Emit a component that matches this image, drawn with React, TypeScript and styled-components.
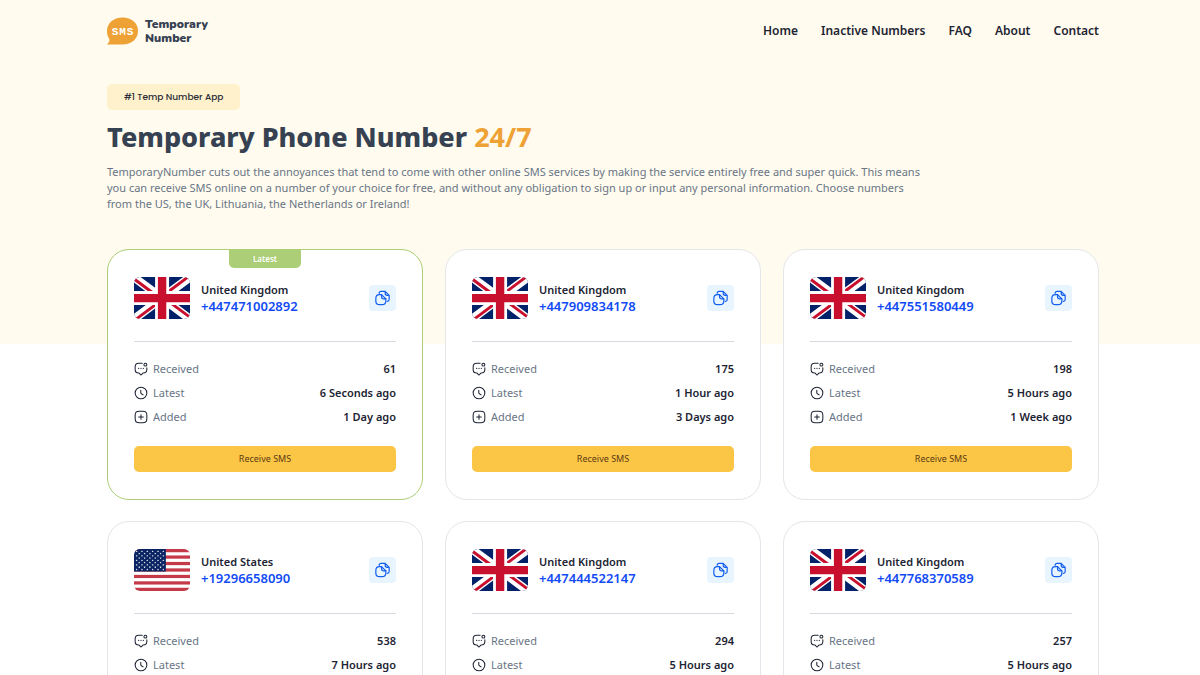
import React from "react";
import styled, { createGlobalStyle, css } from "styled-components";

const GlobalStyle = createGlobalStyle`
  *, *::before, *::after { box-sizing: border-box; }
  body {
    margin: 0;
    background: #fff;
    color: #1d2433;
    font-family: "Noto Sans", "Open Sans", sans-serif;
    font-size: 11px;
    line-height: 16px;
  }
  h1, h2, p, dl, dt, dd { margin: 0; }
  a { color: inherit; text-decoration: none; }
`;

const gutters = css`
  padding-left: 107px;
  padding-right: 101px;
  @media (max-width: 900px) {
    padding-left: 24px;
    padding-right: 24px;
  }
`;

const Hero = styled.div`
  background: #fffbee;
  padding-bottom: 132px;
`;

const Header = styled.header`
  ${gutters}
  display: flex;
  flex-wrap: wrap;
  align-items: center;
  justify-content: space-between;
  padding-top: 17px;
  padding-bottom: 17px;
`;

const Logo = styled.a`
  display: flex;
  align-items: center;
  gap: 7px;
`;

const LogoName = styled.span`
  width: 80px;
  color: #364152;
  font-family: Nunito, Lato, "Noto Sans", sans-serif;
  font-size: 12px;
  line-height: 14px;
  font-weight: 900;
`;

const Nav = styled.nav`
  display: flex;
  flex-wrap: wrap;
  gap: 23px;
`;

const NavLink = styled.a`
  font-size: 12px;
  line-height: 20px;
  font-weight: 600;
`;

const Intro = styled.section`
  ${gutters}
  display: flex;
  flex-direction: column;
  align-items: flex-start;
  padding-top: 22px;
`;

const Tag = styled.span`
  padding: 0 17px;
  border-radius: 5px;
  background: #fff1cb;
  color: #2b2f3a;
  font-family: Poppins, Inter, sans-serif;
  font-size: 9px;
  line-height: 26px;
  font-weight: 500;
`;

const Title = styled.h1`
  margin-top: 8px;
  color: #364152;
  font-size: 27px;
  line-height: 38px;
  font-weight: 800;
`;

const Accent = styled.span`
  color: #eea236;
  font-weight: 700;
`;

const Lead = styled.p`
  margin-top: 8px;
  max-width: 818px;
  color: #697586;
`;

const Grid = styled.main`
  ${gutters}
  display: grid;
  grid-template-columns: repeat(auto-fill, minmax(280px, 1fr));
  gap: 21px 22px;
  margin-top: -95px;
  padding-bottom: 32px;
`;

const Card = styled.article<{ $latest?: boolean }>`
  position: relative;
  padding: 27px 26px;
  border: 1px solid ${(p) => (p.$latest ? "#acce76" : "#e3e6ea")};
  border-radius: 22px;
  background: #fff;
`;

const LatestBadge = styled.span`
  position: absolute;
  top: 0;
  left: 50%;
  width: 72px;
  margin-left: -36px;
  border-radius: 0 0 5px 5px;
  background: #acce76;
  color: #fff;
  font-size: 8px;
  line-height: 18px;
  font-weight: 600;
  text-align: center;
`;

const CardHead = styled.div`
  display: flex;
  align-items: center;
  gap: 11px;
  padding-bottom: 22px;
  border-bottom: 1px solid #d5dae1;
`;

const FlagImage = styled.svg`
  flex: none;
  width: 56px;
  height: 42px;
  border-radius: 6px;
`;

const Who = styled.div`
  flex: 1;
`;

const Country = styled.h2`
  font-size: 11px;
  line-height: 16px;
  font-weight: 600;
`;

const Phone = styled.a`
  display: block;
  color: #124bf5;
  font-size: 13px;
  line-height: 16px;
  font-weight: 600;
`;

const CopyButton = styled.button`
  display: flex;
  align-items: center;
  justify-content: center;
  width: 27px;
  height: 26px;
  padding: 0;
  border: 0;
  border-radius: 4px;
  background: #e8f5ff;
  color: #155eef;
  cursor: pointer;
`;

const Facts = styled.dl`
  padding: 15px 0 17px;
`;

const Fact = styled.div`
  display: flex;
  align-items: center;
  justify-content: space-between;
  line-height: 24px;
`;

const FactName = styled.dt`
  display: flex;
  align-items: center;
  gap: 5px;
  color: #697586;
`;

const FactValue = styled.dd`
  font-weight: 600;
`;

const ReceiveLink = styled.a`
  display: block;
  border-radius: 5px;
  background: #fbc646;
  color: #5b3a14;
  font-size: 9px;
  line-height: 26px;
  text-align: center;
`;

const Stroke = styled.svg`
  flex: none;
  fill: none;
  stroke: currentColor;
  stroke-width: 1.8;
  stroke-linecap: round;
  stroke-linejoin: round;
`;

const FactIcon = styled(Stroke)`
  width: 14px;
  height: 14px;
  color: #1d2433;
`;

const ReceivedIcon = () => (
  <FactIcon viewBox="0 0 24 24" aria-hidden="true">
    <path d="M22 10v3c0 4-2 6-6 6h-.5c-.31 0-.61.15-.8.4l-1.5 2c-.66.88-1.74.88-2.4 0l-1.5-2c-.16-.22-.53-.4-.8-.4H8c-4 0-6-1-6-6V8c0-4 2-6 6-6h6" />
    <circle cx="19.5" cy="4.5" r="2.5" />
    <path d="M15.996 11h.01M11.995 11h.01M7.995 11h.008" strokeWidth="2" />
  </FactIcon>
);

const ClockIcon = () => (
  <FactIcon viewBox="0 0 24 24" aria-hidden="true">
    <circle cx="12" cy="12" r="10" />
    <path d="m15.71 15.18-3.1-1.85c-.54-.32-.98-1.09-.98-1.72v-4.1" />
  </FactIcon>
);

const AddedIcon = () => (
  <FactIcon viewBox="0 0 24 24" aria-hidden="true">
    <path d="M9 22h6c5 0 7-2 7-7V9c0-5-2-7-7-7H9C4 2 2 4 2 9v6c0 5 2 7 7 7ZM8 12h8M12 16V8" />
  </FactIcon>
);

const CopyIcon = () => (
  <Stroke width="17" height="16" viewBox="0 0 24 24" aria-hidden="true">
    <path d="M17 13.4v3c0 4-1.6 5.6-5.6 5.6H7.6C3.6 22 2 20.4 2 16.4v-3.8C2 8.6 3.6 7 7.6 7h3" />
    <path d="M17 13.4h-3.2c-2.4 0-3.2-.8-3.2-3.2V7l6.4 6.4ZM11.6 2h4M7 5c0-1.66 1.34-3 3-3h2.62M22 8v6.19c0 1.55-1.26 2.81-2.81 2.81M22 8h-3c-2.25 0-3-.75-3-3V2l6 6Z" />
  </Stroke>
);

const UkFlag = () => (
  <FlagImage viewBox="0 0 640 480" role="img" aria-label="Flag of the United Kingdom">
    <path fill="#012169" d="M0 0h640v480H0z" />
    <path fill="#fff" d="m75 0 244 181L562 0h78v62L400 241l240 178v61h-80L320 301 81 480H0v-60l239-178L0 64V0z" />
    <path fill="#c8102e" d="m424 281 216 159v40L369 281zm-184 20 6 35L54 480H0zM640 0v3L391 191l2-44L590 0zM0 0l239 176h-60L0 42z" />
    <path fill="#fff" d="M241 0v480h160V0zM0 160v160h640V160z" />
    <path fill="#c8102e" d="M0 193v96h640v-96zM273 0v480h96V0z" />
  </FlagImage>
);

const STRIPE = 480 / 13;

const UsFlag = () => (
  <FlagImage viewBox="0 0 640 480" role="img" aria-label="Flag of the United States">
    <path fill="#fff" d="M0 0h640v480H0z" />
    {[0, 2, 4, 6, 8, 10, 12].map((i) => (
      <rect key={i} y={i * STRIPE} width="640" height={STRIPE} fill="#c43a48" />
    ))}
    <path fill="#0a2463" d="M0 0h364v258.5H0z" />
    {Array.from({ length: 9 }, (_, row) =>
      Array.from({ length: row % 2 ? 5 : 6 }, (_, col) => (
        <polygon
          key={`${row}-${col}`}
          fill="#fff"
          points="0,-13 3,-4 12,-4 5,2 8,11 0,5 -8,11 -5,2 -12,-4 -3,-4"
          transform={`translate(${30 + col * 61 + (row % 2 ? 30 : 0)} ${26 + row * 26})`}
        />
      )),
    )}
  </FlagImage>
);

const LogoMark = () => (
  <svg width="31" height="28" viewBox="0 0 31 28" role="img" aria-label="SMS">
    <path fill="#eea236" d="M15.5 0.5C24.5 0.5 31 6 31 14S24.5 27.5 15.5 27.5H0C1.5 26 2.5 24.5 2.5 22.5C0.8 20 0 17 0 14C0 6 6.5 0.5 15.5 0.5Z" />
    <text x="8 15.5 23" y="18" fill="#fff" fontFamily="Liberation Mono, monospace" fontSize="11" fontWeight="700" textAnchor="middle">
      SMS
    </text>
  </svg>
);

type Country = "United Kingdom" | "United States";

interface PhoneNumber {
  country: Country;
  number: string;
  received: number;
  latest: string;
  added: string;
  isLatest?: boolean;
}

const numbers: PhoneNumber[] = [
  { country: "United Kingdom", number: "+447471002892", received: 61, latest: "6 Seconds ago", added: "1 Day ago", isLatest: true },
  { country: "United Kingdom", number: "+447909834178", received: 175, latest: "1 Hour ago", added: "3 Days ago" },
  { country: "United Kingdom", number: "+447551580449", received: 198, latest: "5 Hours ago", added: "1 Week ago" },
  { country: "United States", number: "+19296658090", received: 538, latest: "7 Hours ago", added: "1 Week ago" },
  { country: "United Kingdom", number: "+447444522147", received: 294, latest: "5 Hours ago", added: "1 Week ago" },
  { country: "United Kingdom", number: "+447768370589", received: 257, latest: "5 Hours ago", added: "1 Week ago" },
];

const NumberCard = ({ item }: { item: PhoneNumber }) => (
  <Card $latest={item.isLatest}>
    {item.isLatest && <LatestBadge>Latest</LatestBadge>}
    <CardHead>
      {item.country === "United States" ? <UsFlag /> : <UkFlag />}
      <Who>
        <Country>{item.country}</Country>
        <Phone href={`#${item.number}`}>{item.number}</Phone>
      </Who>
      <CopyButton type="button" aria-label={`Copy ${item.number}`}>
        <CopyIcon />
      </CopyButton>
    </CardHead>
    <Facts>
      <Fact>
        <FactName><ReceivedIcon />Received</FactName>
        <FactValue>{item.received}</FactValue>
      </Fact>
      <Fact>
        <FactName><ClockIcon />Latest</FactName>
        <FactValue>{item.latest}</FactValue>
      </Fact>
      <Fact>
        <FactName><AddedIcon />Added</FactName>
        <FactValue>{item.added}</FactValue>
      </Fact>
    </Facts>
    <ReceiveLink href={`#${item.number}`}>Receive SMS</ReceiveLink>
  </Card>
);

const links = ["Home", "Inactive Numbers", "FAQ", "About", "Contact"];

export default function App() {
  return (
    <>
      <GlobalStyle />
      <Hero>
        <Header>
          <Logo href="#home">
            <LogoMark />
            <LogoName>Temporary Number</LogoName>
          </Logo>
          <Nav aria-label="Main">
            {links.map((label) => (
              <NavLink key={label} href="#">{label}</NavLink>
            ))}
          </Nav>
        </Header>
        <Intro>
          <Tag>#1 Temp Number App</Tag>
          <Title>Temporary Phone Number <Accent>24/7</Accent></Title>
          <Lead>
            TemporaryNumber cuts out the annoyances that tend to come with other online SMS services by making
            the service entirely free and super quick. This means you can receive SMS online on a number of your
            choice for free, and without any obligation to sign up or input any personal information. Choose
            numbers from the US, the UK, Lithuania, the Netherlands or Ireland!
          </Lead>
        </Intro>
      </Hero>
      <Grid>
        {numbers.map((item) => (
          <NumberCard key={item.number} item={item} />
        ))}
      </Grid>
    </>
  );
}
